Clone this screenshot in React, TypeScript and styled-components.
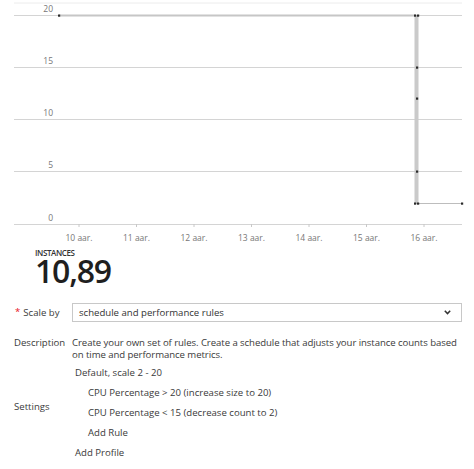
import React from "react";
import styled, { createGlobalStyle } from "styled-components";

const Global = createGlobalStyle`
  html, body { margin: 0; padding: 0; background: #ffffff; }
  body { font-family: "Open Sans", "Noto Sans", sans-serif; color: #333; }
`;

const Page = styled.div`
  width: 474px;
  height: 469px;
  overflow: hidden;
  display: flex;
  flex-direction: column;
  background: #fff;
`;

const ChartSvg = styled.svg`
  display: block;
  width: 474px;
  height: 248px;
  flex: none;
`;

const Metric = styled.div`
  display: flex;
  flex-direction: column;
  padding-left: 35px;
`;

const MetricLabel = styled.div`
  font-size: 8px;
  line-height: 9px;
  font-weight: 600;
  letter-spacing: -0.4px;
  color: #333;
  text-transform: uppercase;
`;

const MetricValue = styled.div`
  font-size: 32px;
  line-height: 28px;
  font-weight: 600;
  letter-spacing: -1.2px;
  color: #1f1f1f;
`;

const Form = styled.div`
  display: grid;
  grid-template-columns: 58px 1fr;
  padding: 0 12px 0 14px;
  margin-top: 18px;
  font-size: 9.6px;
  color: #3a3a3a;
`;

const Label = styled.div<{ $shift?: number }>`
  align-self: center;
  margin-bottom: ${(p) => (p.$shift ? `${p.$shift}px` : "0")};
  white-space: nowrap;
`;

const Required = styled.span`
  color: #e81123;
  margin: 0 3px 0 1px;
  position: relative;
  top: -1px;
`;

const Select = styled.div`
  height: 17px;
  border: 1px solid #c8c8c8;
  display: flex;
  align-items: center;
  justify-content: space-between;
  padding: 0 10px 0 6px;
  color: #333;
`;

const DescLabel = styled.div`
  margin-top: 15px;
  line-height: 12px;
`;

const DescText = styled.div`
  margin-top: 15px;
  line-height: 12px;
  letter-spacing: -0.07px;
`;

const SettingsList = styled.div`
  display: flex;
  flex-direction: column;
  margin-top: 2px;
`;

const SettingItem = styled.div<{ $indent: number }>`
  height: 20px;
  line-height: 20px;
  padding-left: ${(p) => p.$indent}px;
`;

const yLabels = [
  { v: "20", y: 15 },
  { v: "15", y: 67 },
  { v: "10", y: 119 },
  { v: "5", y: 171 },
  { v: "0", y: 224 },
];

const xLabels = ["10 aar.", "11 aar.", "12 aar.", "13 aar.", "14 aar.", "15 aar.", "16 aar."];

function Chart() {
  const dots: [number, number][] = [
    [59, 15],
    [415, 15],
    [418, 15],
    [417, 67],
    [417, 98],
    [417, 171],
    [415, 203],
    [418, 203],
    [462, 203],
  ];
  return (
    <ChartSvg viewBox="0 0 474 248">
      <line x1="14" y1="3" x2="462" y2="3" stroke="#ececec" strokeWidth="1" />
      {yLabels.map((l) => (
        <g key={l.v}>
          <line x1="14" y1={l.y + 0.5} x2="462" y2={l.y + 0.5} stroke="#d4d4d4" strokeWidth="1" />
          <text
            x="53"
            y={l.y - 3}
            textAnchor="end"
            fontSize="8.5"
            fill="#777"
            fontFamily="Open Sans, sans-serif"
          >
            {l.v}
          </text>
        </g>
      ))}
      {xLabels.map((t, i) => {
        const x = 79 + i * 57.5;
        return (
          <g key={t}>
            <line x1={x} y1="224" x2={x} y2="227" stroke="#c8c8c8" strokeWidth="1" />
            <text
              x={x}
              y="241"
              textAnchor="middle"
              fontSize="8.5"
              fill="#777"
              fontFamily="Open Sans, sans-serif"
            >
              {t}
            </text>
          </g>
        );
      })}
      <line x1="59" y1="15.5" x2="416" y2="15.5" stroke="#c6c6c6" strokeWidth="2" />
      <rect x="414.5" y="15" width="4" height="188.5" fill="#cacaca" />
      <line x1="416" y1="203.5" x2="462" y2="203.5" stroke="#bdbdbd" strokeWidth="1" />
      {dots.map(([x, y], i) => (
        <rect key={i} x={x - 1} y={y - 0.5} width="2.2" height="2.2" fill="#2a2a2a" />
      ))}
    </ChartSvg>
  );
}

const Chevron = () => (
  <svg width="7" height="5" viewBox="0 0 7 5">
    <path d="M0.8 0.8 L3.5 3.6 L6.2 0.8" fill="none" stroke="#333" strokeWidth="1.5" />
  </svg>
);

export default function App() {
  return (
    <>
      <Global />
      <Page>
        <Chart />
        <Metric>
          <MetricLabel>Instances</MetricLabel>
          <MetricValue>10,89</MetricValue>
        </Metric>
        <Form>
          <Label>
            <Required>*</Required>Scale by
          </Label>
          <Select>
            <span>schedule and performance rules</span>
            <Chevron />
          </Select>
          <DescLabel>Description</DescLabel>
          <DescText>
            Create your own set of rules. Create a schedule that adjusts your instance counts based
            on time and performance metrics.
          </DescText>
          <Label $shift={12}>Settings</Label>
          <SettingsList>
            <SettingItem $indent={3}>Default, scale 2 - 20</SettingItem>
            <SettingItem $indent={16}>CPU Percentage &gt; 20 (increase size to 20)</SettingItem>
            <SettingItem $indent={16}>CPU Percentage &lt; 15 (decrease count to 2)</SettingItem>
            <SettingItem $indent={16}>Add Rule</SettingItem>
            <SettingItem $indent={3}>Add Profile</SettingItem>
          </SettingsList>
        </Form>
      </Page>
    </>
  );
}
